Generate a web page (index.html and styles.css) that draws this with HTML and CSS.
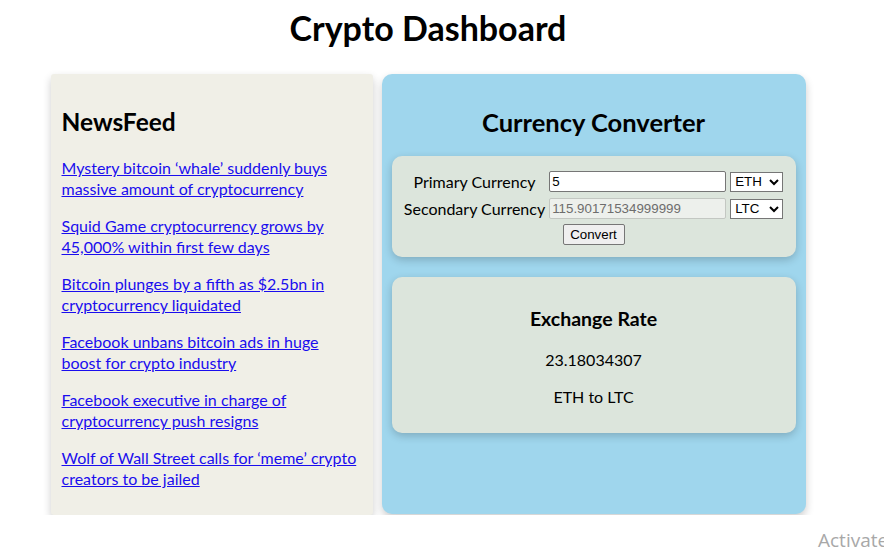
FILE: index.html
```html
<!DOCTYPE html>
<html lang="en">
<head>
<meta charset="utf-8">
<title>Crypto Dashboard</title>
<link rel="stylesheet" href="styles.css">
</head>
<body>
<div class="app">
  <h1 class="title">Crypto Dashboard</h1>
  <div class="dashboard">
    <div class="news-feed">
      <h2>NewsFeed</h2>
      <p><a href="#">Mystery bitcoin ‘whale’ suddenly buys massive amount of cryptocurrency</a></p>
      <p><a href="#">Squid Game cryptocurrency grows by 45,000% within first few days</a></p>
      <p><a href="#">Bitcoin plunges by a fifth as $2.5bn in cryptocurrency liquidated</a></p>
      <p><a href="#">Facebook unbans bitcoin ads in huge boost for crypto industry</a></p>
      <p><a href="#">Facebook executive in charge of cryptocurrency push resigns</a></p>
      <p><a href="#">Wolf of Wall Street calls for ‘meme’ crypto creators to be jailed</a></p>
    </div>
    <div class="converter">
      <h2>Currency Converter</h2>
      <div class="input-box">
        <div class="form-grid">
          <label class="lbl">Primary Currency</label>
          <input class="field" type="number" value="5">
          <select class="pick"><option>ETH</option></select>
          <label class="lbl">Secondary Currency</label>
          <input class="field" type="number" value="115.90171534999999" disabled>
          <select class="pick"><option>LTC</option></select>
        </div>
        <div class="btn-row"><button class="convert">Convert</button></div>
      </div>
      <div class="rate-box">
        <h3>Exchange Rate</h3>
        <p>23.18034307</p>
        <p>ETH to LTC</p>
      </div>
    </div>
  </div>
</div>
<div class="watermark">Activate</div>
</body>
</html>
```
FILE: styles.css
```css
html, body {
  margin: 0;
  padding: 0;
  background: #ffffff;
}
body {
  font-family: Lato, "Open Sans", sans-serif;
  color: #000;
  overflow: hidden;
}
.app {
  width: 856px;
}
.title {
  margin: 8px 0 0;
  font-size: 34px;
  line-height: 40px;
  font-weight: 700;
  text-align: center;
}
.dashboard {
  display: flex;
  justify-content: center;
  gap: 9px;
  margin-top: 26px;
}
.news-feed {
  width: 300px;
  height: 441px;
  padding: 0 11px;
  background: #f0efe7;
  border-radius: 3px;
  box-shadow: 0 4px 8px rgba(0, 0, 0, 0.2);
}
.news-feed h2,
.converter h2 {
  margin: 33px 0 20px;
  font-size: 24.5px;
  line-height: 30px;
  font-weight: 700;
}
.news-feed p {
  margin: 0 0 16px;
  font-size: 16px;
  line-height: 21px;
}
.news-feed a {
  color: #1a0dee;
  text-decoration: underline;
}
.converter {
  width: 424px;
  height: 440px;
  background: #9fd6ed;
  border-radius: 10px;
  box-shadow: 0 4px 8px rgba(0, 0, 0, 0.2);
  display: flex;
  flex-direction: column;
}
.converter h2 {
  margin-bottom: 19px;
  font-size: 25.5px;
  text-align: center;
}
.input-box,
.rate-box {
  margin: 0 10px;
  background: #dce5dc;
  border-radius: 10px;
  box-shadow: 0 3px 8px rgba(0, 0, 0, 0.2);
}
.input-box {
  height: 101px;
  box-sizing: border-box;
  padding-top: 15px;
}
.form-grid {
  display: grid;
  grid-template-columns: auto 177px 53px;
  column-gap: 4px;
  row-gap: 6px;
  justify-content: center;
  align-items: center;
}
.lbl {
  font-size: 16px;
  line-height: 21px;
  text-align: center;
  white-space: nowrap;
}
.field {
  box-sizing: border-box;
  width: 177px;
  height: 21px;
  margin: 0;
  padding: 1px 2px;
  border: 1px solid #767676;
  border-radius: 2px;
  background: #ffffff;
  font-family: "Liberation Sans", Arial, sans-serif;
  font-size: 13.33px;
  color: #000;
  -moz-appearance: textfield;
}
.field::-webkit-outer-spin-button,
.field::-webkit-inner-spin-button {
  -webkit-appearance: none;
  margin: 0;
}
.field:disabled {
  background: #edf0ec;
  border-color: #c3c7c2;
  color: #6d6d6d;
}
.pick {
  box-sizing: border-box;
  width: 53px;
  height: 20px;
  margin: 0;
  font-family: "Liberation Sans", Arial, sans-serif;
  font-size: 13.33px;
  border: 1px solid #767676;
  border-radius: 0;
  background: #ffffff;
  color: #000;
}
.btn-row {
  display: flex;
  justify-content: center;
  margin-top: 5px;
}
.convert {
  box-sizing: border-box;
  width: 62px;
  height: 21px;
  padding: 1px 6px;
  font-family: "Liberation Sans", Arial, sans-serif;
  font-size: 13.33px;
  color: #000;
  background: #efefef;
  border: 1px solid #767676;
  border-radius: 2px;
}
.rate-box {
  margin-top: 20px;
  height: 156px;
  box-sizing: border-box;
  padding-top: 30px;
  text-align: center;
}
.rate-box h3 {
  margin: 0 0 18px;
  font-size: 19.5px;
  line-height: 24px;
  font-weight: 700;
}
.rate-box p {
  margin: 0 0 16px;
  font-size: 16px;
  line-height: 21px;
}
.watermark {
  position: absolute;
  left: 818px;
  top: 527px;
  font-family: "Open Sans", sans-serif;
  font-size: 19px;
  color: #a8a8a8;
  white-space: nowrap;
}
```
